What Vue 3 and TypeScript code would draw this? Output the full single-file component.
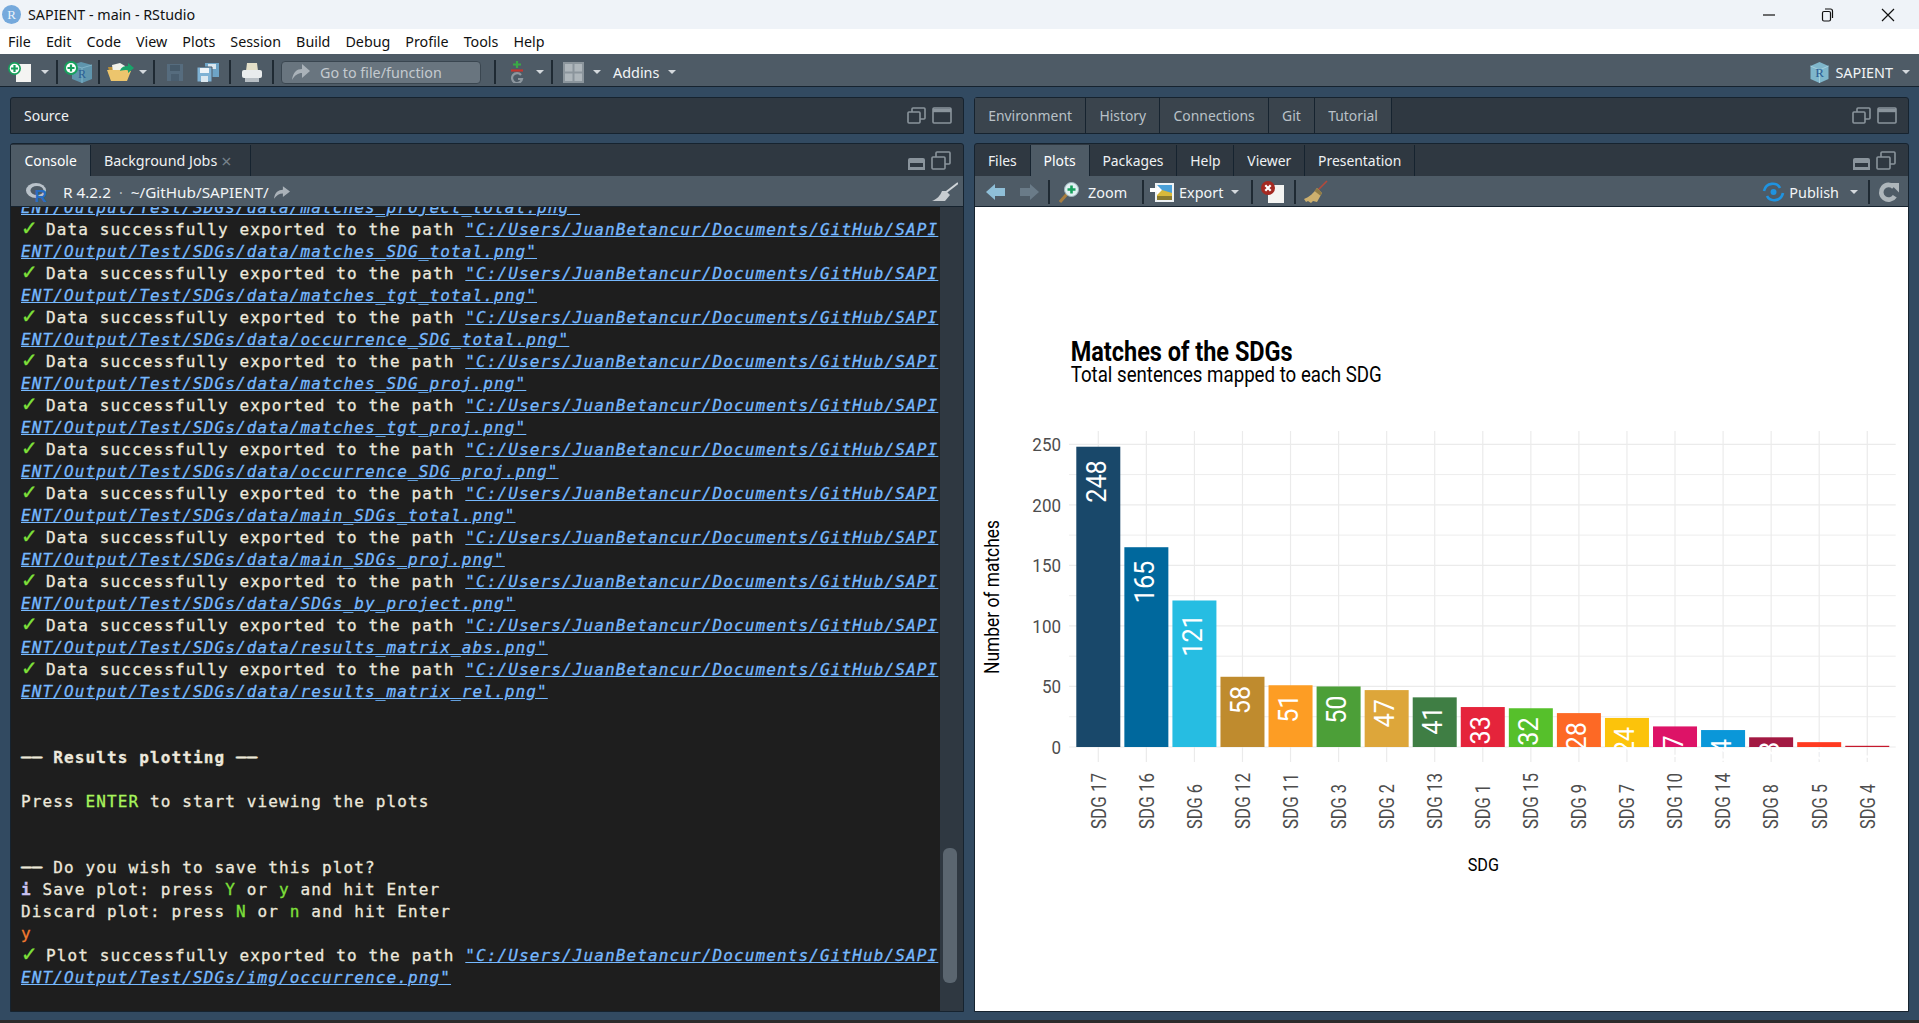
<script setup lang="ts">
interface Bar { name: string; value: number; color: string }

const menus: string[] = ['File', 'Edit', 'Code', 'View', 'Plots', 'Session', 'Build', 'Debug', 'Profile', 'Tools', 'Help']
const topTabs: string[] = ['Environment', 'History', 'Connections', 'Git', 'Tutorial']
const plotTabs: string[] = ['Files', 'Plots', 'Packages', 'Help', 'Viewer', 'Presentation']
const files: string[] = [
  'matches_SDG_total', 'matches_tgt_total', 'occurrence_SDG_total', 'matches_SDG_proj', 'matches_tgt_proj',
  'occurrence_SDG_proj', 'main_SDGs_total', 'main_SDGs_proj', 'SDGs_by_project', 'results_matrix_abs', 'results_matrix_rel',
]
const PATH_HEAD = '"C:/Users/JuanBetancur/Documents/GitHub/SAPI'

const bars: Bar[] = [
  { name: 'SDG 17', value: 248, color: '#19486A' },
  { name: 'SDG 16', value: 165, color: '#00689D' },
  { name: 'SDG 6', value: 121, color: '#26BDE2' },
  { name: 'SDG 12', value: 58, color: '#BF8B2E' },
  { name: 'SDG 11', value: 51, color: '#FD9D24' },
  { name: 'SDG 3', value: 50, color: '#4C9F38' },
  { name: 'SDG 2', value: 47, color: '#DDA63A' },
  { name: 'SDG 13', value: 41, color: '#3F7E44' },
  { name: 'SDG 1', value: 33, color: '#E5243B' },
  { name: 'SDG 15', value: 32, color: '#56C02B' },
  { name: 'SDG 9', value: 28, color: '#FD6925' },
  { name: 'SDG 7', value: 24, color: '#FCC30B' },
  { name: 'SDG 10', value: 17, color: '#DD1367' },
  { name: 'SDG 14', value: 14, color: '#0A97D9' },
  { name: 'SDG 8', value: 8, color: '#A21942' },
  { name: 'SDG 5', value: 4, color: '#FF3A21' },
  { name: 'SDG 4', value: 1, color: '#C5192D' },
]

const Y0 = 747
const K = 1.2108
const yOf = (v: number): number => Y0 - v * K
const xOf = (i: number): number => 1098.3 + 48.06 * i

const majors = [0, 50, 100, 150, 200, 250].map((v) => ({
  v,
  y: yOf(v),
  len: String(v).length * 9.55,
}))
const minors = [25, 75, 125, 175, 225].map(yOf)
const columns = bars.map((b, i) => {
  const cx = xOf(i)
  const top = yOf(b.value)
  const digits = String(b.value).length
  return {
    ...b,
    cx,
    top,
    height: Y0 - top,
    labelTransform: `translate(${cx + 7.5} ${top + 4.5 * digits}) rotate(-90)`,
    labelLen: digits * 14.2,
    tickTransform: `translate(${cx + 7.3} 829) rotate(-90)`,
    tickLen: b.name.length === 6 ? 56 : 45,
  }
})
</script>

<template>
  <div class="app">
    <header class="titlebar">
      <svg class="win-logo" width="19" height="19" viewBox="0 0 19 19">
        <circle cx="9.5" cy="9.5" r="9.5" fill="#75a9dc" />
        <text x="9.5" y="14" text-anchor="middle" font-size="13" font-family="Liberation Serif, serif" fill="#eaf2fa">R</text>
      </svg>
      <span class="win-title">SAPIENT - main - RStudio</span>
      <div class="win-controls">
        <svg width="14" height="14" viewBox="0 0 14 14"><path d="M1 7h12" stroke="#111" stroke-width="1.2" /></svg>
        <svg class="ctl2" width="14" height="14" viewBox="0 0 14 14" fill="none" stroke="#111" stroke-width="1.2"><rect x="2.5" y="3.5" width="8" height="9.5" rx="1.5" /><path d="M5 1h5.5a2 2 0 0 1 2 2v7" /></svg>
        <svg class="ctl3" width="14" height="14" viewBox="0 0 14 14"><path d="M1 1l12 12M13 1L1 13" stroke="#111" stroke-width="1.2" /></svg>
      </div>
    </header>

    <nav class="menubar">
      <span v-for="m in menus" :key="m" class="menu">{{ m }}</span>
    </nav>

    <div class="toolbar main-tools">
      <svg class="ml8" width="24" height="20" viewBox="0 0 24 20">
        <path d="M8 2h15v18H8z" fill="#f4f4f2" />
        <circle cx="6.5" cy="6.5" r="6.5" fill="#17a05d" /><circle cx="6.5" cy="6.5" r="4.8" fill="#fff" />
        <path d="M6.5 3v7M3 6.5h7" stroke="#17a05d" stroke-width="2.2" />
      </svg>
      <i class="caret ml9"></i><i class="sep ml7"></i>
      <svg class="ml6" width="29" height="22" viewBox="0 0 29 22">
        <path d="M8 4l9-3 11 3v14l-10 4-10-4z" fill="#5f95ad" /><path d="M8 4l10 3 10-3M18 7v15" stroke="#7fb3c8" fill="none" />
        <text x="18" y="17" text-anchor="middle" font-size="12" font-family="Liberation Serif, serif" fill="#2c5f96">R</text>
        <circle cx="7" cy="7" r="7" fill="#17a05d" /><circle cx="7" cy="7" r="5" fill="#fff" />
        <path d="M7 3.5v7M3.5 7h7" stroke="#17a05d" stroke-width="2.2" />
      </svg>
      <i class="sep ml5"></i>
      <svg class="ml7" width="27" height="20" viewBox="0 0 27 20">
        <path d="M1 5h8l2 2h9v11H4z" fill="#b88f3a" /><path d="M5 3l8-2 5 3v6H6z" fill="#f1f1ea" />
        <path d="M0 8h19l5 1-4 10H4z" fill="#ecc56d" />
        <path d="M13 9c1-4 4-5 8-5V1l6 5-6 5V8c-3 0-6 0-8 1z" fill="#1aa36a" />
      </svg>
      <i class="caret ml5"></i><i class="sep ml6"></i>
      <svg class="ml12" width="16" height="17" viewBox="0 0 16 17">
        <path d="M0 0h16v17H0z" fill="#566c7e" /><path d="M3 1h10v6H3z" fill="#465a6a" /><path d="M4 10h8v7H4z" fill="#4a5e6f" />
      </svg>
      <svg class="ml14" width="22" height="19" viewBox="0 0 22 19">
        <path d="M8 0h14v14H8z" fill="#6ea4c6" /><path d="M11 1h8v5h-8z" fill="#dbe8f0" />
        <path d="M0 4h15v15H0z" fill="#7fb2d4" stroke="#4e5b66" /><path d="M3 5h9v5H3z" fill="#eef4f8" /><path d="M4 13h7v6H4z" fill="#dbe8f0" />
      </svg>
      <i class="sep ml10"></i>
      <svg class="ml11" width="20" height="19" viewBox="0 0 20 19">
        <path d="M5 0h10l1 8H4z" fill="#e3dfc8" /><rect y="7" width="20" height="8" rx="2" fill="#e9eced" /><path d="M3 15h14v4H3z" fill="#b8bfc4" />
      </svg>
      <i class="sep ml10"></i>
      <div class="goto ml7">
        <svg width="18" height="16" viewBox="0 0 18 16"><path d="M0 16C1 8 5 5 10 5V0l8 7-8 7V9C6 9 3 11 0 16z" fill="#aab2b9" /></svg>
        <span>Go to file/function</span>
      </div>
      <i class="sep ml13"></i>
      <svg class="ml14" width="14" height="22" viewBox="0 0 14 22">
        <path d="M7 0v7M3 3.5h8" stroke="#3aa946" stroke-width="2.2" /><path d="M1 9.5h12" stroke="#c5362f" stroke-width="2.2" />
        <path d="M11 14a5 5 0 1 0 1 4H8" fill="none" stroke="#8d979f" stroke-width="2.2" />
      </svg>
      <i class="caret ml12"></i><i class="sep ml7"></i>
      <svg class="ml10" width="21" height="21" viewBox="0 0 21 21">
        <rect width="21" height="21" fill="#8b959c" /><path d="M2 2h7.5v7.5H2zM11.5 2H19v7.5h-7.5zM2 11.5h7.5V19H2zM11.5 11.5H19V19h-7.5z" fill="#aeb6bb" />
      </svg>
      <i class="caret ml9"></i>
      <span class="tool-text ml12">Addins</span>
      <i class="caret ml9"></i>
      <div class="tools-right">
        <svg width="21" height="21" viewBox="0 0 21 21">
          <path d="M10.5 0l9 4v13l-9 4-9-4V4z" fill="#7fb6cb" /><path d="M1.5 4l9 4 9-4M10.5 8v13" stroke="#a3cedd" fill="none" />
          <text x="10.5" y="15" text-anchor="middle" font-size="13" font-family="Liberation Serif, serif" fill="#2c5f96">R</text>
        </svg>
        <span class="tool-text ml5">SAPIENT</span>
        <i class="caret ml9"></i>
      </div>
    </div>

    <main class="workspace">
      <section class="column left-col">
        <div class="panel head-panel">
          <span class="source-label">Source</span>
          <div class="pane-icons">
            <svg width="19" height="17" viewBox="0 0 19 17" fill="none" stroke="#8a949c" stroke-width="1.6"><rect x="1" y="5" width="12" height="11" rx="1" /><path d="M5 5V2a1 1 0 0 1 1-1h11a1 1 0 0 1 1 1v9a1 1 0 0 1-1 1h-4" /></svg>
            <svg width="20" height="17" viewBox="0 0 20 17" fill="none" stroke="#8a949c" stroke-width="1.6"><rect x="1" y="1" width="18" height="15" rx="1" /><path d="M1 3.5h18" stroke-width="3.4" /></svg>
          </div>
        </div>

        <div class="panel body-panel">
          <div class="tabstrip">
            <span class="tab tab-active tab-console">Console</span>
            <span class="tab tab-jobs">Background Jobs <b class="close">×</b></span>
            <div class="pane-icons lower">
              <svg width="19" height="12" viewBox="0 0 19 12" fill="#8a949c"><path d="M1 2a2 2 0 0 1 2-2h13a2 2 0 0 1 2 2v10H1z" /><path d="M3 5h13v4H3z" fill="#2f3841" /></svg>
              <svg width="20" height="19" viewBox="0 0 20 19" fill="none" stroke="#8a949c" stroke-width="1.6"><rect x="1" y="6" width="13" height="12" rx="1" /><path d="M5 6V2a1 1 0 0 1 1-1h12a1 1 0 0 1 1 1v10a1 1 0 0 1-1 1h-4" /></svg>
            </div>
          </div>
          <div class="toolbar sub-tools">
            <svg class="ml14" width="24" height="20" viewBox="0 0 24 20">
              <ellipse cx="11" cy="8.5" rx="10" ry="7.5" fill="#b9c2ca" /><ellipse cx="12" cy="8.5" rx="6.5" ry="4.5" fill="#4e5b66" />
              <text x="16" y="20" text-anchor="middle" font-size="17" font-weight="700" font-family="Liberation Sans, sans-serif" fill="#276dc3">R</text>
            </svg>
            <span class="r-text r-ver">R 4.2.2</span>
            <span class="dot">·</span>
            <span class="r-text r-path">~/GitHub/SAPIENT/</span>
            <svg class="ml5" width="16" height="13" viewBox="0 0 18 14"><path d="M0 14C1 7 5 4 10 4V0l8 6-8 6V8C6 8 3 10 0 14z" fill="#aab2b9" /></svg>
            <svg class="broom-right" width="26" height="20" viewBox="0 0 26 20">
              <path d="M26 1L13 11" stroke="#cfd4d8" stroke-width="2" /><path d="M14 9l4 4-5 6-13 0c5-2 8-5 10-10z" fill="#c7ccd0" />
            </svg>
          </div>
          <div class="console-row">
            <div class="console">
              <div class="line"><a class="link">ENT/Output/Test/SDGs/data/matches_project_total.png"</a></div>
              <template v-for="f in files" :key="f">
                <div class="line"><span class="tick">✓</span>Data successfully exported to the path <a class="link">{{ PATH_HEAD }}</a></div>
                <div class="line"><a class="link">ENT/Output/Test/SDGs/data/{{ f }}.png"</a></div>
              </template>
              <div class="line">&nbsp;</div>
              <div class="line">&nbsp;</div>
              <div class="line strong"><span class="rule">──</span> Results plotting <span class="rule">──</span></div>
              <div class="line">&nbsp;</div>
              <div class="line">Press <span class="bright">ENTER</span> to start viewing the plots</div>
              <div class="line">&nbsp;</div>
              <div class="line">&nbsp;</div>
              <div class="line"><span class="rule">──</span> Do you wish to save this plot?</div>
              <div class="line"><span class="info">i</span> Save plot: press <span class="key">Y</span> or <span class="key">y</span> and hit Enter</div>
              <div class="line">Discard plot: press <span class="key">N</span> or <span class="key">n</span> and hit Enter</div>
              <div class="line answer">y</div>
              <div class="line"><span class="tick">✓</span>Plot successfully exported to the path <a class="link">{{ PATH_HEAD }}</a></div>
              <div class="line"><a class="link">ENT/Output/Test/SDGs/img/occurrence.png"</a></div>
            </div>
            <div class="scrolltrack"><div class="scrollthumb"></div></div>
          </div>
        </div>
      </section>

      <section class="column right-col">
        <div class="panel head-panel">
          <span v-for="t in topTabs" :key="t" class="tab tab-dim">{{ t }}</span>
          <div class="pane-icons">
            <svg width="19" height="17" viewBox="0 0 19 17" fill="none" stroke="#8a949c" stroke-width="1.6"><rect x="1" y="5" width="12" height="11" rx="1" /><path d="M5 5V2a1 1 0 0 1 1-1h11a1 1 0 0 1 1 1v9a1 1 0 0 1-1 1h-4" /></svg>
            <svg width="20" height="17" viewBox="0 0 20 17" fill="none" stroke="#8a949c" stroke-width="1.6"><rect x="1" y="1" width="18" height="15" rx="1" /><path d="M1 3.5h18" stroke-width="3.4" /></svg>
          </div>
        </div>

        <div class="panel body-panel">
          <div class="tabstrip">
            <span v-for="t in plotTabs" :key="t" class="tab" :class="{ 'tab-active': t === 'Plots' }">{{ t }}</span>
            <div class="pane-icons lower">
              <svg width="19" height="12" viewBox="0 0 19 12" fill="#8a949c"><path d="M1 2a2 2 0 0 1 2-2h13a2 2 0 0 1 2 2v10H1z" /><path d="M3 5h13v4H3z" fill="#2f3841" /></svg>
              <svg width="20" height="19" viewBox="0 0 20 19" fill="none" stroke="#8a949c" stroke-width="1.6"><rect x="1" y="6" width="13" height="12" rx="1" /><path d="M5 6V2a1 1 0 0 1 1-1h12a1 1 0 0 1 1 1v10a1 1 0 0 1-1 1h-4" /></svg>
            </div>
          </div>
          <div class="toolbar sub-tools">
            <svg class="ml11" width="19" height="16" viewBox="0 0 19 16"><path d="M0 8l9-8v4h10v8H9v4z" fill="#8fbfd8" /></svg>
            <svg class="ml15" width="19" height="16" viewBox="0 0 19 16"><path d="M19 8l-9-8v4H0v8h10v4z" fill="#6a7b88" /></svg>
            <i class="sep ml9"></i>
            <svg class="ml9" width="20" height="21" viewBox="0 0 20 21">
              <path d="M1 20l7-8" stroke="#a87d3f" stroke-width="3" />
              <circle cx="12.5" cy="7.5" r="7" fill="#dff0f2" stroke="#9fb7bf" /><path d="M12.5 3.5v8M8.5 7.5h8" stroke="#17a05d" stroke-width="2.6" />
            </svg>
            <span class="tool-text ml9">Zoom</span>
            <i class="sep ml15"></i>
            <svg class="ml6" width="24" height="19" viewBox="0 0 24 19">
              <rect x="5" y="0" width="19" height="19" fill="#eef2f4" /><path d="M7 2h15v8H7z" fill="#4aa0d8" /><path d="M7 9l5-2 10 3v7H7z" fill="#d9b93a" /><path d="M7 13h15v4H7z" fill="#8a7a2f" />
              <path d="M0 5h7V2l5 5-5 5V9H0z" fill="#fff" />
            </svg>
            <span class="tool-text ml5">Export</span>
            <i class="caret ml8"></i><i class="sep ml12"></i>
            <svg class="ml8" width="23" height="22" viewBox="0 0 23 22">
              <path d="M7 4h16v18H7z" fill="#f4f4f2" /><circle cx="7" cy="7" r="7" fill="#a52a22" /><path d="M4.3 4.3l5.4 5.4M9.7 4.3l-5.4 5.4" stroke="#fff" stroke-width="2.2" />
            </svg>
            <i class="sep ml10"></i>
            <svg class="ml8" width="24" height="24" viewBox="0 0 24 24">
              <path d="M23 1L14 10" stroke="#b5493a" stroke-width="1.6" />
              <path d="M13 8l5 5-5 9-4-1-2 2-3-2-2 1-2-3c5-2 10-6 13-11z" fill="#cdb06e" />
              <path d="M13 8l5 5-1.5 2.7L10.5 11z" fill="#8f7a45" />
            </svg>
            <div class="tools-right">
              <svg width="23" height="20" viewBox="0 0 23 20" fill="none" stroke="#1f93e0" stroke-width="2.6">
                <path d="M2 9c2-9 13-9 16-3" /><path d="M21 11c-2 9-13 9-16 3" /><circle cx="11.5" cy="10" r="3" fill="#1f93e0" stroke="none" />
              </svg>
              <span class="tool-text ml4">Publish</span>
              <i class="caret ml11"></i><i class="sep ml10"></i>
              <svg class="ml8" width="21" height="21" viewBox="0 0 20 20">
                <path d="M16 13.5A7 7 0 1 1 15 4.8" fill="none" stroke="#aeb6bb" stroke-width="4.4" /><path d="M11 1h9v9z" fill="#aeb6bb" />
              </svg>
            </div>
          </div>

          <div class="plot-area">
            <svg class="chart" width="933" height="803" viewBox="975 207 933 803" font-family="Roboto, sans-serif">
              <g stroke="#ebebeb">
                <line v-for="(y, i) in minors" :key="'mn' + i" x1="1069" x2="1895.7" :y1="y" :y2="y" stroke-width="0.9" />
                <line v-for="m in majors" :key="'mj' + m.v" x1="1069" x2="1895.7" :y1="m.y" :y2="m.y" stroke-width="1.2" />
                <line v-for="c in columns" :key="'v' + c.name" :x1="c.cx" :x2="c.cx" y1="431" y2="762" stroke-width="1.2" />
              </g>
              <rect v-for="c in columns" :key="'b' + c.name" :x="c.cx - 22" :y="c.top" width="44" :height="c.height" :fill="c.color" />
              <text
                v-for="c in columns"
                :key="'l' + c.name"
                :transform="c.labelTransform"
                text-anchor="end"
                font-size="28"
                font-weight="400"
                fill="#fff"
                :textLength="c.labelLen"
                lengthAdjust="spacingAndGlyphs"
              >{{ c.value }}</text>
              <text
                v-for="m in majors"
                :key="'y' + m.v"
                x="1061"
                :y="m.y + 6.7"
                text-anchor="end"
                font-size="18.5"
                fill="#4d4d4d"
                :textLength="m.len"
                lengthAdjust="spacingAndGlyphs"
              >{{ m.v }}</text>
              <text
                v-for="c in columns"
                :key="'t' + c.name"
                :transform="c.tickTransform"
                font-size="20"
                fill="#4d4d4d"
                :textLength="c.tickLen"
                lengthAdjust="spacingAndGlyphs"
              >{{ c.name }}</text>
              <text x="1070.7" y="360.7" font-size="27" font-weight="700" fill="#000" textLength="222" lengthAdjust="spacingAndGlyphs">Matches of the SDGs</text>
              <text x="1070.7" y="382" font-size="21.5" fill="#000" textLength="311" lengthAdjust="spacingAndGlyphs">Total sentences mapped to each SDG</text>
              <text x="1467.7" y="871" font-size="19" fill="#000" textLength="31.3" lengthAdjust="spacingAndGlyphs">SDG</text>
              <text transform="translate(999.3 674) rotate(-90)" font-size="19.5" fill="#000" textLength="154" lengthAdjust="spacingAndGlyphs">Number of matches</text>
            </svg>
          </div>
        </div>
      </section>
    </main>
    <div class="taskstrip"></div>
  </div>
</template>

<style>
html, body { margin: 0; padding: 0; background: #324a61; }
</style>

<style scoped>
.app {
  width: 1919px;
  height: 1023px;
  display: flex;
  flex-direction: column;
  overflow: hidden;
  font-family: "Noto Sans", "Open Sans", sans-serif;
  font-size: 14px;
  color: #111;
}
.titlebar {
  height: 29px;
  flex: none;
  background: #eff3f8;
  display: flex;
  align-items: center;
  padding-left: 2px;
}
.win-title { margin-left: 7px; font-size: 14.3px; color: #111; }
.win-controls { margin-left: auto; display: flex; align-items: center; padding-right: 24px; }
.ctl2 { margin-left: 44px; }
.ctl3 { margin-left: 47px; }
.menubar {
  height: 25px;
  flex: none;
  background: #fff;
  display: flex;
  align-items: center;
  padding-left: 8px;
  gap: 15px;
  font-size: 14.3px;
}
.toolbar { display: flex; align-items: center; background: #4e5b66; }
.main-tools { height: 28px; padding-top: 4px; flex: none; border-bottom: 1px solid #16232f; box-sizing: content-box; }
.tools-right { margin-left: auto; display: flex; align-items: center; padding-right: 9px; }
.tool-text { color: #f2f5f7; font-size: 14.4px; white-space: nowrap; }
.r-text { color: #f2f5f7; font-size: 15.3px; white-space: nowrap; }
.caret {
  display: block;
  width: 0;
  height: 0;
  flex: none;
  border-left: 4px solid transparent;
  border-right: 4px solid transparent;
  border-top: 4px solid #d4d9dd;
}
.sep { display: block; width: 2px; height: 24px; flex: none; background: #1f2a33; }
.ml4 { margin-left: 4px; } .ml5 { margin-left: 5px; } .ml6 { margin-left: 6px; } .ml7 { margin-left: 7px; }
.ml8 { margin-left: 8px; } .ml9 { margin-left: 9px; } .ml10 { margin-left: 10px; } .ml11 { margin-left: 11px; }
.ml12 { margin-left: 12px; } .ml13 { margin-left: 13px; } .ml14 { margin-left: 14px; } .ml15 { margin-left: 15px; }
svg { flex: none; display: block; }
.goto {
  width: 200px;
  height: 23px;
  box-sizing: border-box;
  background: #69757f;
  border: 1px solid #3a4650;
  border-radius: 4px;
  display: flex;
  align-items: center;
  padding-left: 10px;
  gap: 10px;
  color: #c4cacf;
  font-size: 14.3px;
}
.workspace {
  flex: 1;
  min-height: 0;
  display: flex;
  gap: 10px;
  background: #324a61;
  padding: 10px 10px 8px 10px;
}
.column { display: flex; flex-direction: column; gap: 9px; min-width: 0; }
.left-col { width: 954px; }
.right-col { width: 935px; }
.panel {
  background: #2f3841;
  border: 1px solid #16232f;
  border-radius: 3px 3px 0 0;
  box-sizing: border-box;
}
.head-panel {
  height: 37px;
  flex: none;
  display: flex;
  align-items: stretch;
  color: #eef1f3;
}
.source-label { align-self: center; margin-left: 13px; color: #f0f2f4; font-size: 14px; }
.pane-icons { margin-left: auto; display: flex; align-items: center; gap: 6px; padding-right: 11px; }
.pane-icons.lower { align-items: flex-end; padding-bottom: 6px; padding-right: 12px; gap: 5px; }
.body-panel { flex: 1; min-height: 0; display: flex; flex-direction: column; }
.tabstrip { height: 31px; flex: none; display: flex; margin-top: 1px; }
.tab {
  display: flex;
  align-items: center;
  padding: 0 12.9px;
  color: #eef1f3;
  border-right: 1px solid #16232f;
  white-space: nowrap;
  font-size: 13.9px;
}
.tab-dim { background: #3a444d; color: #b9c1c7; padding: 0 13.2px; }
.tab-active { background: #4e5b66; color: #fff; }
.tab-console { width: 80px; box-sizing: border-box; padding-left: 13.5px; }
.tab-jobs { width: 160px; box-sizing: border-box; padding-left: 13px; font-size: 14.3px; }
.close { color: #77828b; font-weight: 400; font-size: 18px; margin-left: 4px; }
.sub-tools { height: 28px; padding-top: 2px; flex: none; border-bottom: 1px solid #16232f; }
.r-ver { margin-left: 14px; }
.dot { color: #b9c1c7; margin-left: 8px; }
.r-path { margin-left: 8px; }
.broom-right { margin-left: auto; margin-right: 5px; }
.console-row { flex: 1; min-height: 0; display: flex; }
.console {
  flex: 1;
  min-width: 0;
  background: #1e1e1e;
  overflow: hidden;
  display: flex;
  flex-direction: column;
  justify-content: flex-end;
  padding: 0 0 22px 10px;
  font-family: "DejaVu Sans Mono", monospace;
  font-size: 16px;
  letter-spacing: 1.118px;
  color: #ece8dc;
  -webkit-text-stroke: 0.3px currentColor;
}
.line { height: 22px; line-height: 22px; flex: none; white-space: pre; }
.tick {
  display: inline-block;
  width: 25px;
  height: 16px;
  color: #7fe03a;
  font-family: "DejaVu Sans", sans-serif;
  font-size: 20px;
  font-weight: 700;
  letter-spacing: 0;
  line-height: 16px;
}
.link { color: #76b9ff; font-style: italic; text-decoration: underline; }
.strong { font-weight: 700; }
.rule { text-shadow: 1px 0 currentColor; }
.bright { color: #a8f55c; }
.key { color: #7fe03a; }
.info { color: #c9c2f2; font-weight: 700; }
.answer { color: #f07a30; }
.scrolltrack { width: 23px; flex: none; background: #2f3841; padding-top: 641px; box-sizing: border-box; }
.scrollthumb { width: 14px; height: 135px; margin-left: 3px; background: #5b6670; border-radius: 6px; }
.plot-area { flex: 1; min-height: 0; background: #fff; overflow: hidden; }
.chart { display: block; }
.taskstrip { height: 3px; flex: none; background: #2b2b2b; }
</style>
